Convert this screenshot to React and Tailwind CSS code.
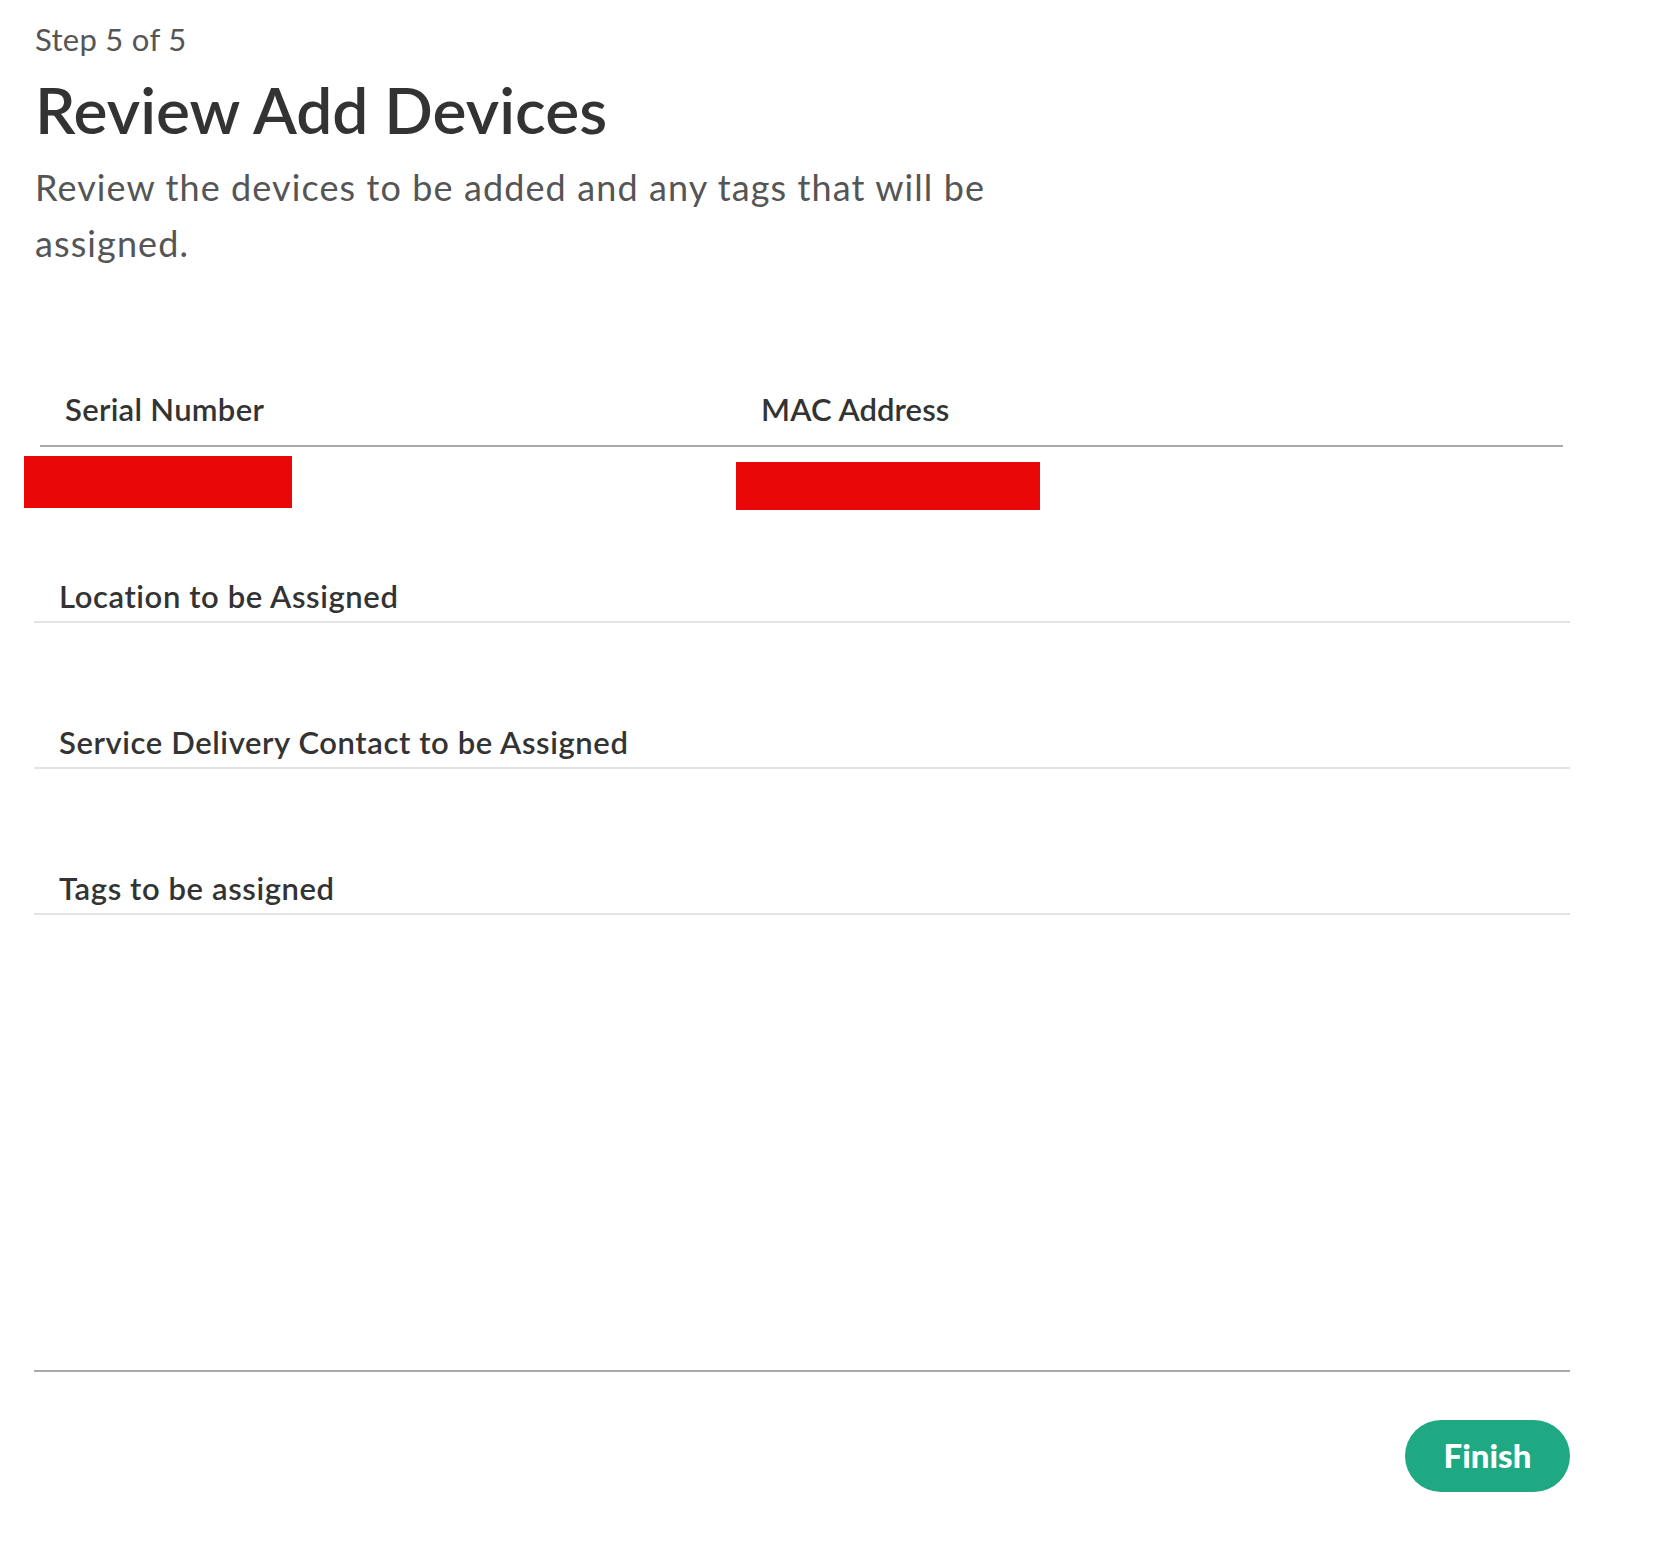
import React from "react";

function Section({ title }) {
  return (
    <div className="h-[146px]">
      <div className="border-b-2 border-[#e3e3e3] pb-[6px] pl-[25px]">
        <div className="text-[31px] leading-[38px] font-semibold tracking-[0.6px] text-[#333333]">{title}</div>
      </div>
    </div>
  );
}

export default function App() {
  return (
    <div className="min-h-[1556px] w-[1678px] bg-white font-['Lato',sans-serif] pl-[34px]">
      <div className="w-[1536px] flex flex-col">
        {/* Header */}
        <div className="pt-[20px] pl-[1px]">
          <div className="text-[31px] leading-[38px] tracking-[0.3px] text-[#555555]">Step 5 of 5</div>
          <h1 className="mt-[14px] text-[64px] leading-[76px] font-semibold text-[#333333]">
            Review Add Devices
          </h1>
          <p className="mt-[11px] max-w-[1040px] text-[36px] leading-[56px] tracking-[1.1px] text-[#555555]">
            Review the devices to be added and any tags that will be assigned.
          </p>
        </div>

        {/* Table */}
        <div className="mt-[119px] ml-[6px] w-[1523px]">
          <div className="flex border-b-2 border-[#aaaaaa] pb-[17px]">
            <div className="w-[696px] pl-[25px] text-[31px] leading-[38px] font-semibold tracking-[0.3px] text-[#333333]">
              Serial Number
            </div>
            <div className="flex-1 pl-[25px] text-[31px] leading-[38px] font-semibold tracking-[0.1px] text-[#333333]">
              MAC Address
            </div>
          </div>
          <div className="flex h-[130px] items-start">
            <div className="w-[696px]">
              <div className="mt-[9px] -ml-[16px] h-[52px] w-[268px] bg-[#e90808]" />
            </div>
            <div className="flex-1">
              <div className="mt-[15px] h-[48px] w-[304px] bg-[#e90808]" />
            </div>
          </div>
        </div>

        {/* Sections */}
        <Section title="Location to be Assigned" />
        <Section title="Service Delivery Contact to be Assigned" />
        <Section title="Tags to be assigned" />

        {/* Footer */}
        <div className="mt-[355px] border-t-2 border-[#aaaaaa]" />
        <div className="mt-[48px] flex justify-end">
          <button className="flex h-[72px] w-[165px] items-center justify-center rounded-full bg-[#1fa982] text-[33px] font-black text-white">
            Finish
          </button>
        </div>
      </div>
    </div>
  );
}
